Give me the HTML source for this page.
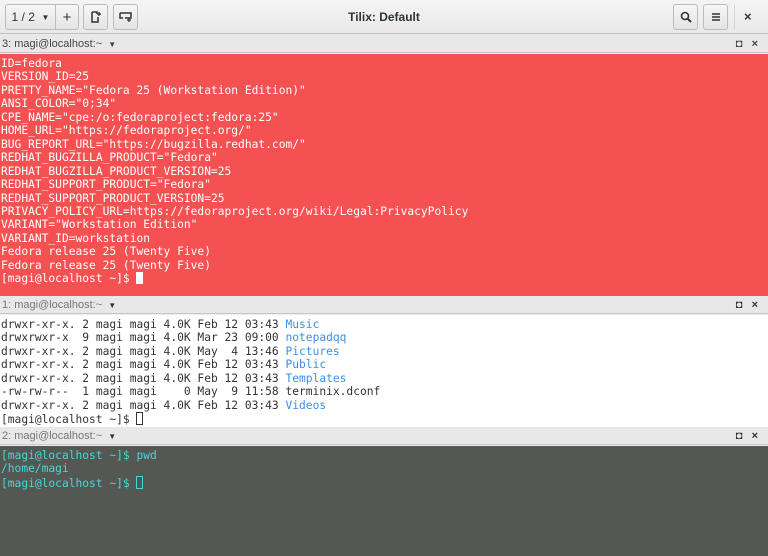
<!DOCTYPE html>
<html><head><style>
*{margin:0;padding:0;box-sizing:border-box}
body{width:768px;height:556px;overflow:hidden;background:#ececec;font-family:"Liberation Sans",sans-serif;position:relative}
.hdr{position:absolute;left:0;top:0;width:768px;height:34px;background:linear-gradient(#f4f4f4,#e9e9e9);border-bottom:1px solid #bdbdbd}
.btn{position:absolute;top:4px;height:26px;border:1px solid #bcbcbc;border-radius:3px;background:linear-gradient(#f6f6f6,#e4e4e4);font-size:12px;color:#333;display:flex;align-items:center;justify-content:center}
.title{position:absolute;left:0;width:768px;top:10px;text-align:center;font-size:12px;font-weight:bold;color:#2e3436}
.pt{position:absolute;left:0;width:768px;height:18px;background:#e8e8e8;border-bottom:1px solid #c8c8c8;font-size:11px;color:#444;padding-left:2px;line-height:18px}
.pt .r{position:absolute;right:10px;top:0;font-size:11px;font-weight:bold}
.term{position:absolute;left:0;width:768px;font-family:"DejaVu Sans Mono","Liberation Mono",monospace;font-size:11.25px;line-height:13.45px;white-space:pre;padding-left:1px;padding-top:3px}
.b{color:#3a8fe8}
.cur{display:inline-block;width:7px;height:12px;vertical-align:-2px;line-height:0}
</style></head><body>
<div class="hdr">
 <div class="btn" style="left:5px;width:51px;border-radius:3px 0 0 3px">1 / 2 &nbsp;<span style="font-size:8px">▼</span></div>
 <div class="btn" style="left:55px;width:24px;border-radius:0 3px 3px 0;font-size:15px">+</div>
 <div class="btn" style="left:83px;width:25px"><svg width="12" height="12" viewBox="0 0 12 12"><path d="M2 1h5v2M2 1v10h6V6" fill="none" stroke="#333" stroke-width="1.5"/><path d="M9 1v4M7 3h4" stroke="#333" stroke-width="1.3"/></svg></div>
 <div class="btn" style="left:113px;width:25px"><svg width="14" height="12" viewBox="0 0 14 12"><path d="M1 2h11v5H6M1 2v5h3" fill="none" stroke="#333" stroke-width="1.5"/><path d="M8 9h4M10 7v4" stroke="#333" stroke-width="1.3"/></svg></div>
 <div class="title">Tilix: Default</div>
 <div class="btn" style="left:673px;width:25px"><svg width="12" height="12" viewBox="0 0 12 12"><circle cx="5" cy="5" r="3.5" fill="none" stroke="#333" stroke-width="1.6"/><path d="M7.5 7.5L11 11" stroke="#333" stroke-width="2"/></svg></div>
 <div class="btn" style="left:703px;width:25px"><svg width="10" height="10" viewBox="0 0 10 10"><path d="M1 2h8M1 5h8M1 8h8" stroke="#333" stroke-width="1.5"/></svg></div>
 <div style="position:absolute;left:734px;top:5px;width:1px;height:24px;background:#d5d5d5"></div>
 <div style="position:absolute;left:744px;top:9px;font-size:13px;font-weight:bold;color:#333">×</div>
</div>
<div class="pt" style="top:35px">3: magi@localhost:~ &nbsp;<span style="font-size:8px">▼</span><span class="r">◘ &nbsp;&nbsp;×</span></div>
<div class="term" style="top:54px;height:242px;background:#f55152;color:#fff">ID=fedora
VERSION_ID=25
PRETTY_NAME="Fedora 25 (Workstation Edition)"
ANSI_COLOR="0;34"
CPE_NAME="cpe:/o:fedoraproject:fedora:25"
HOME_URL="https://fedoraproject.org/"
BUG_REPORT_URL="https://bugzilla.redhat.com/"
REDHAT_BUGZILLA_PRODUCT="Fedora"
REDHAT_BUGZILLA_PRODUCT_VERSION=25
REDHAT_SUPPORT_PRODUCT="Fedora"
REDHAT_SUPPORT_PRODUCT_VERSION=25
PRIVACY_POLICY_URL=https://fedoraproject.org/wiki/Legal:PrivacyPolicy
VARIANT="Workstation Edition"
VARIANT_ID=workstation
Fedora release 25 (Twenty Five)
Fedora release 25 (Twenty Five)
[magi@localhost ~]$ <span class="cur" style="background:#fff"></span></div>
<div class="pt" style="top:296px;color:#777">1: magi@localhost:~ &nbsp;<span style="font-size:8px;color:#333">▼</span><span class="r" style="color:#333">◘ &nbsp;&nbsp;×</span></div>
<div class="term" style="top:315px;height:112px;background:#fff;color:#333">drwxr-xr-x. 2 magi magi 4.0K Feb 12 03:43 <span class="b">Music</span>
drwxrwxr-x  9 magi magi 4.0K Mar 23 09:00 <span class="b">notepadqq</span>
drwxr-xr-x. 2 magi magi 4.0K May  4 13:46 <span class="b">Pictures</span>
drwxr-xr-x. 2 magi magi 4.0K Feb 12 03:43 <span class="b">Public</span>
drwxr-xr-x. 2 magi magi 4.0K Feb 12 03:43 <span class="b">Templates</span>
-rw-rw-r--  1 magi magi    0 May  9 11:58 terminix.dconf
drwxr-xr-x. 2 magi magi 4.0K Feb 12 03:43 <span class="b">Videos</span>
[magi@localhost ~]$ <span class="cur" style="border:1px solid #333;height:13px"></span></div>
<div class="pt" style="top:427px;color:#777">2: magi@localhost:~ &nbsp;<span style="font-size:8px;color:#333">▼</span><span class="r" style="color:#333">◘ &nbsp;&nbsp;×</span></div>
<div class="term" style="top:446px;height:110px;background:#555753;color:#45d8d8">[magi@localhost ~]$ pwd
/home/magi
[magi@localhost ~]$ <span class="cur" style="border:1px solid #45d8d8;height:13px"></span></div>
</body></html>
